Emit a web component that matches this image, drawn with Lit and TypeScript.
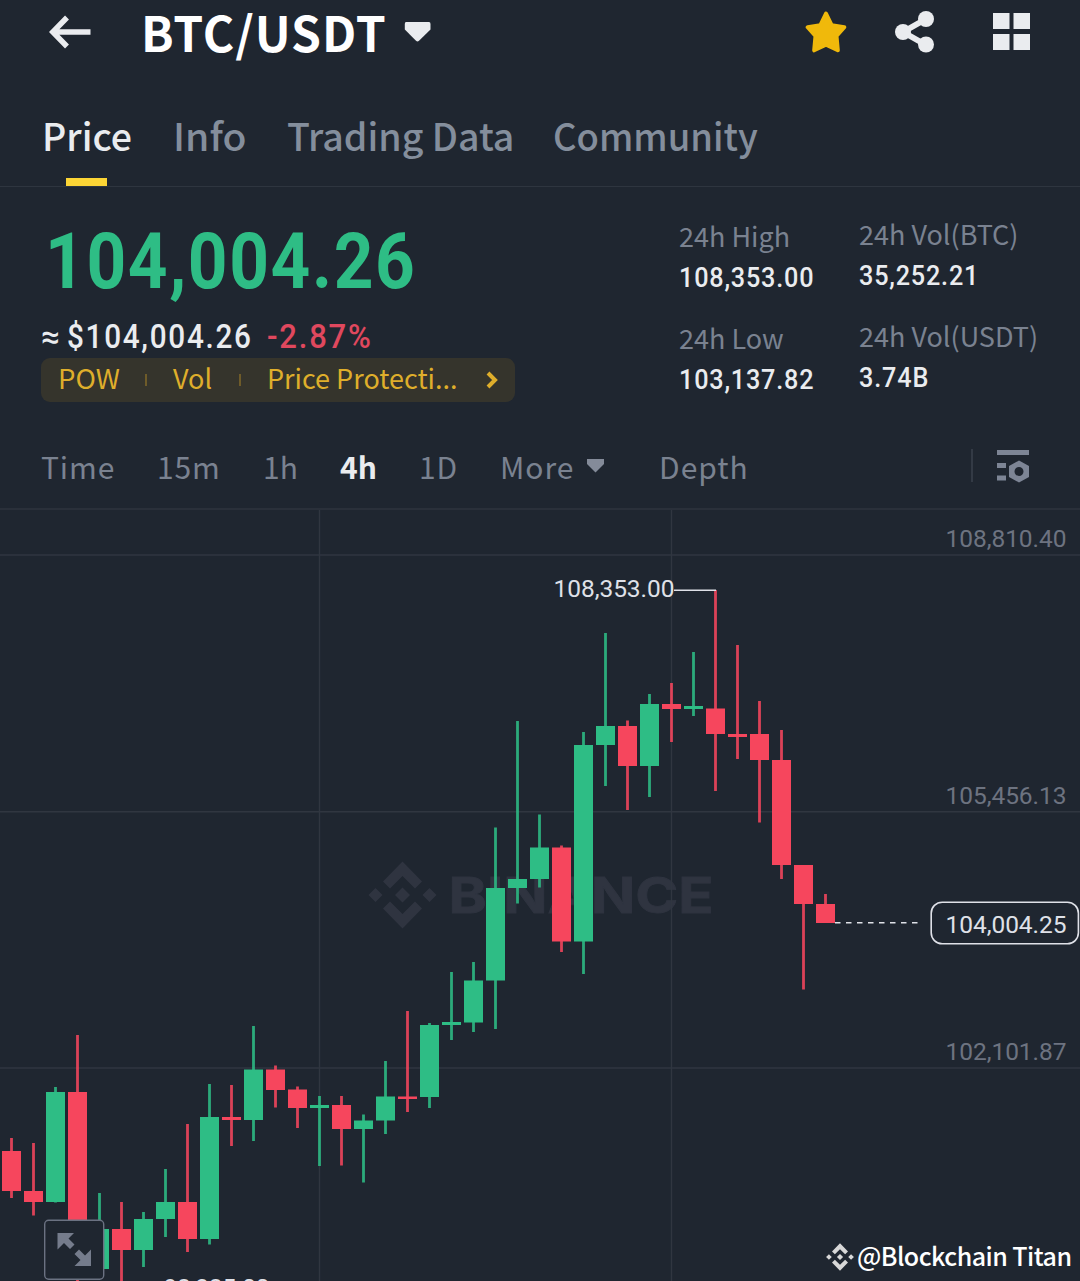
import { LitElement, html, svg, css } from "lit";
import { customElement } from "lit/decorators.js";

type Candle = [open: "u" | "d", top: number, bottom: number, high: number, low: number];

const CANDLES: Candle[] = [
  ["d", 1151, 1191, 1138, 1198],
  ["d", 1191, 1202, 1143, 1215.5],
  ["u", 1092, 1202, 1087, 1202.5],
  ["d", 1092, 1262, 1035, 1285],
  ["u", 1229, 1269, 1193, 1269],
  ["d", 1229, 1250, 1202, 1285],
  ["u", 1219, 1250, 1212, 1267],
  ["u", 1202, 1219, 1169, 1237],
  ["d", 1202, 1239, 1124, 1252],
  ["u", 1117, 1239, 1084, 1244.5],
  ["d", 1117, 1120, 1085, 1146],
  ["u", 1069.5, 1120, 1026, 1141],
  ["d", 1069.5, 1090, 1065.5, 1107.5],
  ["d", 1089.5, 1108, 1086.5, 1128],
  ["u", 1105, 1108, 1096, 1166],
  ["d", 1105, 1129, 1096, 1165.5],
  ["u", 1120.5, 1129, 1114.5, 1182.5],
  ["u", 1096.5, 1120.5, 1061, 1134],
  ["d", 1096.5, 1099, 1011, 1112],
  ["u", 1025, 1097, 1023, 1108],
  ["u", 1022, 1025, 972, 1040],
  ["u", 980.5, 1022.5, 962, 1032],
  ["u", 888, 980.5, 827.5, 1029],
  ["u", 879, 888, 721, 903.5],
  ["u", 847.5, 879, 814.5, 887.5],
  ["d", 847.5, 941.5, 845.5, 952],
  ["u", 745, 941.5, 732, 974],
  ["u", 726, 745, 633, 786],
  ["d", 726, 766, 720.5, 810],
  ["u", 704, 766, 694, 797],
  ["d", 704, 709, 683, 742],
  ["u", 706, 709, 652, 716],
  ["d", 708.5, 734, 590, 791],
  ["d", 734, 737, 645, 759],
  ["d", 734, 760, 701, 822.5],
  ["d", 760, 865, 730, 879],
  ["d", 865, 904, 865, 989.5],
  ["d", 904, 923, 894, 923],
];

const logo = svg`
  <path d="M-19.5 -13.5 L0 -33.5 L19.5 -13.5 L12.5 -6.5 L0 -19 L-12.5 -6.5 Z"/>
  <path d="M-19.5 13.5 L0 33.5 L19.5 13.5 L12.5 6.5 L0 19 L-12.5 6.5 Z"/>
  <path d="M-34 0 L-27 -7 L-20 0 L-27 7 Z M34 0 L27 -7 L20 0 L27 7 Z M-7.5 0 L0 -7.5 L7.5 0 L0 7.5 Z"/>`;

@customElement("kline-chart")
export class KlineChart extends LitElement {
  static styles = css`
    :host { display: block; height: 771px; }
    svg { display: block; }
    .grid { stroke: #303640; stroke-width: 1.4; }
    .u { fill: #2ebd85; }
    .d { fill: #f6465d; }
    .wick { opacity: 0.88; }
    .num { font: 400 24.5px Roboto, sans-serif; }
    .axis { fill: #6d7380; }
    .bright { fill: #dfe1e8; }
    .mark { fill: #2f3440; }
    .brand { font: 700 50px Inter, sans-serif; stroke: #2f3440; stroke-width: 0.8; }
    .line { stroke: #dfe1e8; stroke-width: 1.6; fill: none; }
    .pill { fill: #1f2630; }
    .expand { fill: #1f2630; stroke: #6b7282; stroke-width: 1.4; }
    .arrows { fill: #757c8c; }
    .sig { fill: #fff; font: 500 25px "Noto Sans CJK SC", sans-serif; }
    .siglogo { fill: #d8d8d8; }
  `;

  render() {
    const axis: [string, number][] = [["108,810.40", 547], ["105,456.13", 804], ["102,101.87", 1060]];
    return html`<svg width="1080" height="771" viewBox="0 510 1080 771">
      <g class="mark">
        <g transform="translate(402.5 895)">${logo}</g>
        <text class="brand" x="448.500" y="913" textLength="265" lengthAdjust="spacingAndGlyphs">BINANCE</text>
      </g>
      <g class="grid">
        ${[555, 811.8, 1068].map((y) => svg`<line x1="0" x2="1080" y1=${y} y2=${y}/>`)}
        ${[319.5, 671.5].map((x) => svg`<line x1=${x} x2=${x} y1="510" y2="1281"/>`)}
      </g>
      ${CANDLES.map(([k, t, b, h, l], i) => {
        const x = 11.5 + 22 * i;
        return svg`<rect class="wick ${k}" x=${x - 1.4} y=${h} width="2.8" height=${l - h}/>
          <rect class=${k} x=${x - 9.5} y=${t} width="19" height=${b - t}/>`;
      })}
      ${axis.map(([s, y]) => svg`<text class="num axis" x="945.5" y=${y} textLength="121">${s}</text>`)}
      <text class="num bright" x="553.5" y="597" textLength="121">108,353.00</text>
      <path class="line" d="M674 590.3 H716"/>
      <path class="line" stroke-dasharray="5.5 5.5" d="M835 922.7 H919"/>
      <rect class="line pill" x="931.2" y="902.2" width="147.2" height="41.6" rx="11"/>
      <text class="num bright" x="945.5" y="933" textLength="121">104,004.25</text>
      <text class="num bright" x="163.5" y="1296" textLength="106">98,385.00</text>
      <rect class="expand" x="44.7" y="1220.2" width="59" height="59" rx="4"/>
      <path class="arrows" d="M57.500 1233 H74 L68.500 1238.500 L74.500 1244.500 L70 1249 L64 1243 L57.500 1249.500 Z
        M91 1266 V1249.500 L85 1255.500 L79 1249.500 L74.500 1254 L80.500 1260 L74.500 1266 Z"/>
      <g class="siglogo" transform="translate(840 1257) scale(.41)">${logo}</g>
      <text class="sig" x="857" y="1266" textLength="215">@Blockchain Titan</text>
    </svg>`;
  }
}

@customElement("app-root")
export class AppRoot extends LitElement {
  static styles = css`
    :host { display: block; width: 1080px; height: 1281px; overflow: hidden; background: #1f2630; color: #eaecef;
      font-family: "Noto Sans CJK SC", "Open Sans", sans-serif; white-space: nowrap; }
    svg { display: block; flex: none; }
    .fit { display: block; flex: none; transform-origin: 0 50%; }
    .head { display: flex; height: 66px; padding-left: 49px; }
    .title { margin-left: 50px; width: 263px; font-size: 48px; font-weight: 700; line-height: 62px; color: #fff; letter-spacing: 1px; }
    .back { margin-top: 15px; }
    .caret { margin-top: 22px; }
    .actions { display: flex; margin-left: 374px; padding-top: 11px; gap: 48px; }
    .apps { margin: 2px 0 0 10px; }
    .tabs { display: flex; border-bottom: 1px solid #2e353f; box-sizing: border-box; height: 121px; padding-left: 42px;
      font-size: 37.5px; font-weight: 500; line-height: 137px; color: #848e9c; }
    .tab { display: flex; flex-direction: column; position: relative; }
    .tab.on { color: #eaecef; }
    .tab.on::after { content: ""; position: absolute; left: 24px; top: 112px; width: 41px; height: 8px; background: #fcd535; }
    .summary { display: flex; height: 246px; }
    .left { width: 679px; padding: 28px 0 0 41px; box-sizing: border-box; }
    .last { font: 700 77px/94px Roboto, sans-serif; color: #2ebd85; height: 93px; padding-left: 4px; }
    .approx { display: flex; font: 500 33px/58px Roboto, sans-serif; height: 50px; }
    .red { color: #e0485e; }
    .tags { display: flex; align-items: center; width: 474px; height: 44px; border-radius: 9px; background: #35342c; color: #dfae2b;
      font-size: 27px; line-height: 40px; box-sizing: border-box; padding-left: 17px; }
    .tags .fit { margin-top: -4px; }
    .tags i { width: 2px; height: 12px; margin-right: 26px; background: #6e5b29; }
    .col { width: 180px; padding-top: 31px; }
    .col + .col { padding-top: 29px; }
    .stat { height: 102px; }
    .k { font-size: 27px; line-height: 36px; color: #7a8290; }
    .v { font: 500 28px/40px Roboto, sans-serif; padding-top: 4px; }
    .frames { display: flex; height: 77px; padding: 0 0 0 41px; box-sizing: border-box; border-bottom: 2px solid #2a303a;
      font-size: 30px; line-height: 67px; color: #7a8290; }
    .frames .on { color: #eaecef; font-weight: 700; }
    .mcaret { margin-top: 26px; }
    .bar { width: 2px; height: 33px; background: #333a45; margin: 16px 24px 0 0; }
    .cog { margin-top: 17px; }
  `;

  render() {
    const fit = (s: string, w: number, sx = 1, cls = "", ls = 0) =>
      html`<span class="fit ${cls}" style="width:${w}px;transform:scaleX(${sx});letter-spacing:${ls}px">${s}</span>`;
    return html`
      <div class="head">
        <svg class="back" width="42" height="34" fill="none" stroke="#eaecef" stroke-width="5.5"><path d="M41.5 17 H4 M18 2.5 L3.8 17 L18 31.5"/></svg>
        <div class="title">BTC/USDT</div>
        <svg class="caret" width="27" height="20" fill="#eaecef"><path d="M2 0 H25 Q26.5 0 26.5 2 V7.5 L15 18.8 Q13.5 20 12 18.8 L0.8 7.5 V2 Q.8 0 2 0Z"/></svg>
        <div class="actions">
          <svg width="42" height="42" fill="#f0b90b" stroke="#f0b90b" stroke-width="4" stroke-linejoin="round"><path d="M21 2.5 L26.7 14.3 L39.3 16.2 L31.5 25 L32.8 39.3 L21 33.8 L9.2 39.3 L10.5 25 L2.7 16.2 L15.3 14.3 Z"/></svg>
          <svg width="40" height="42" fill="#eaecef"><path d="M8 21 L31 8 M8 21 L31 34" stroke="#eaecef" stroke-width="6"/><circle cx="8" cy="21" r="8"/><circle cx="31" cy="8" r="8"/><circle cx="31" cy="33.5" r="8"/></svg>
          <svg class="apps" width="38" height="38" fill="#eaecef"><path d="M0 0H16.5V16H0Z M20.5 0H37V16H20.5Z M0 21H16.5V37H0Z M20.5 21H37V37H20.5Z"/></svg>
        </div>
      </div>
      <div class="tabs">
        <div class="tab on">${fit("Price", 131)}</div>
        <div class="tab">${fit("Info", 114, 1.04)}</div>
        <div class="tab">${fit("Trading Data", 266)}</div>
        <div class="tab">${fit("Community", 210, 0.972)}</div>
      </div>
      <div class="summary">
        <div class="left">
          <div class="last">${fit("104,004.26", 380, 0.9, "", 1.8)}</div>
          <div class="approx">${fit("≈", 26)}${fit("$104,004.26", 200, 0.9, "", 1.9)}${fit("-2.87%", 110, 0.94, "red", 1.9)}</div>
          <div class="tags">${fit("POW", 87, 1.02)}<i></i>${fit("Vol", 66)}<i></i>${fit("Price Protecti...", 219)}
            <svg width="12" height="18" fill="none" stroke="#dfae2b" stroke-width="4"><path d="M2 2 L9 9 L2 16"/></svg></div>
        </div>
        <div class="col">
          <div class="stat"><div class="k">${fit("24h High", 110)}</div><div class="v">${fit("108,353.00", 135, 0.9, "", 0.9)}</div></div>
          <div class="stat"><div class="k">${fit("24h Low", 110)}</div><div class="v">${fit("103,137.82", 135, 0.9, "", 0.9)}</div></div>
        </div>
        <div class="col">
          <div class="stat"><div class="k">${fit("24h Vol(BTC)", 110)}</div><div class="v">${fit("35,252.21", 135, 0.9, "", 0.9)}</div></div>
          <div class="stat"><div class="k">${fit("24h Vol(USDT)", 110)}</div><div class="v">${fit("3.74B", 135, 0.9, "", 1)}</div></div>
        </div>
      </div>
      <div class="frames">
        ${fit("Time", 116, 1, "", 0.9)}${fit("15m", 106, 1, "", 0.9)}${fit("1h", 77)}${fit("4h", 79, 1, "on")}${fit("1D", 81, 1, "", 0.8)}${fit("More", 86, 1, "", 1)}
        <svg class="mcaret" width="73" height="14" fill="#848b99"><path d="M1 0 H18 V5 L9.5 13.5 L1 5 Z"/></svg>
        ${fit("Depth", 312, 1, "", 1)}
        <div class="bar"></div>
        <svg class="cog" width="34" height="34" fill="#7d8595"><path d="M0 0H32V5H0Z M0 13H9V18H0Z M0 25.5H9V30.5H0Z"/><path fill-rule="evenodd" d="M22 10.5 L32 16 V27 L22 32.5 L12 27 V16 Z M22 17 A4.5 4.5 0 1 0 22 26 A4.5 4.5 0 1 0 22 17Z"/></svg>
      </div>
      <kline-chart></kline-chart>
    `;
  }
}
